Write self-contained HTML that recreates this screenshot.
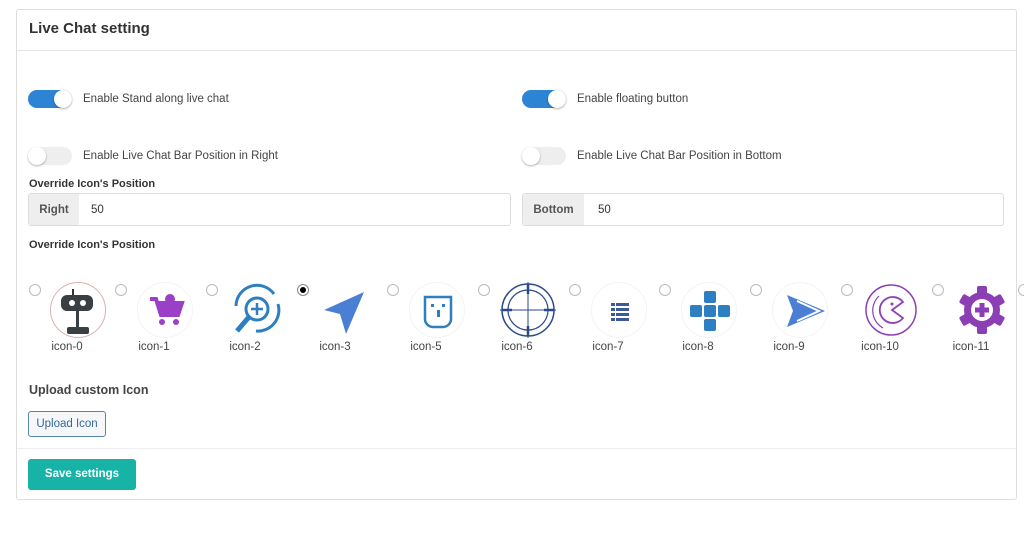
<!DOCTYPE html>
<html><head><style>
*{margin:0;padding:0;box-sizing:border-box}
body{width:1024px;height:542px;background:#fff;font-family:"Liberation Sans",sans-serif;color:#333;position:relative;overflow:hidden}
.card{position:absolute;left:16px;top:9px;width:1001px;height:491px;border:1px solid #ddd;border-radius:3px;background:#fff}
.a{position:absolute}
.t{font-size:11.5px;color:#444}
.tog{position:absolute;width:44px;height:18px;border-radius:9px}
.tog.on{background:#2d84d4}
.tog.off{background:#eee}
.tog .k{position:absolute;top:0;width:18px;height:18px;border-radius:50%;background:#fff;box-shadow:0 1px 2px rgba(0,0,0,.3)}
.lbl{font-size:11px;font-weight:bold;color:#333}
.inp{position:absolute;height:33px;border:1px solid #ddd;border-radius:3px;background:#fff}
.inp .ad{position:absolute;left:0;top:0;bottom:0;background:#eee;font-size:11.5px;color:#555;font-weight:bold;display:flex;align-items:center;justify-content:center}
.inp .v{position:absolute;top:10px;font-size:11.5px;color:#333}
.rad{position:absolute;width:12px;height:12px;border:1px solid #bbb;border-radius:50%;background:#fff;top:284px}
.ic{position:absolute;top:282px;width:56px;height:56px;border-radius:50%;border:1px solid #f3f3f3}
.ic svg{position:absolute;left:0;top:0}
.il{position:absolute;top:341px;font-size:11.5px;color:#444;width:60px;text-align:center}
</style></head><body>
<div class="card">
<div class="a" style="left:12px;top:10px;font-size:15px;font-weight:bold;color:#333">Live Chat setting</div>
<div class="a" style="left:0;right:0;top:40px;border-top:1px solid #e5e5e5"></div>
<div class="a" style="left:0;right:0;top:438px;border-top:1px solid #eee"></div>
</div>
<div class="tog on" style="left:28px;top:90px"><div class="k" style="left:26px"></div></div>
<div class="a t" style="left:83px;top:93px">Enable Stand along live chat</div>
<div class="tog on" style="left:522px;top:90px"><div class="k" style="left:26px"></div></div>
<div class="a t" style="left:577px;top:93px">Enable floating button</div>
<div class="tog off" style="left:28px;top:147px"><div class="k" style="left:0"></div></div>
<div class="a t" style="left:83px;top:150px">Enable Live Chat Bar Position in Right</div>
<div class="tog off" style="left:522px;top:147px"><div class="k" style="left:0"></div></div>
<div class="a t" style="left:577px;top:150px">Enable Live Chat Bar Position in Bottom</div>
<div class="a lbl" style="left:29px;top:178px">Override Icon's Position</div>
<div class="inp" style="left:28px;top:193px;width:483px"><div class="ad" style="width:50px">Right</div><div class="v" style="left:62px">50</div></div>
<div class="inp" style="left:522px;top:193px;width:482px"><div class="ad" style="width:61px">Bottom</div><div class="v" style="left:75px">50</div></div>
<div class="a lbl" style="left:29px;top:239px">Override Icon's Position</div>

<div class="rad" style="left:29px"></div>
<div class="ic" style="left:50px;border-color:#d9b0b0"><svg width="56" height="56"><line x1="22" y1="6" x2="22" y2="14" stroke="#333" stroke-width="2"/><rect x="10" y="12" width="32" height="16" rx="6" fill="#3a3f44"/><circle cx="21" cy="20" r="3" fill="#fff"/><circle cx="32" cy="20" r="3" fill="#fff"/><rect x="25" y="28" width="3" height="17" fill="#3a3f44"/><rect x="16" y="44" width="22" height="7" rx="2" fill="#3a3f44"/></svg></div>
<div class="il" style="left:37px">icon-0</div>

<div class="rad" style="left:115px"></div>
<div class="ic" style="left:137px"><svg width="56" height="56"><path d="M12 16h6l5 16h17l4-12H20" fill="none" stroke="#9b3fc7" stroke-width="4"/><rect x="20" y="20" width="22" height="10" fill="#9b3fc7"/><circle cx="32" cy="16" r="5" fill="#9b3fc7"/><circle cx="24" cy="39" r="3" fill="#9b3fc7"/><circle cx="38" cy="39" r="3" fill="#9b3fc7"/></svg></div>
<div class="il" style="left:124px">icon-1</div>

<div class="rad" style="left:206px"></div>
<div class="ic" style="left:228px;border:none"><svg width="56" height="56"><path d="M8 24A21 21 0 0 1 46 12M50 22A21 21 0 0 1 28 49" fill="none" stroke="#2d7fc1" stroke-width="3"/><circle cx="29" cy="27" r="11" fill="none" stroke="#2d7fc1" stroke-width="3"/><path d="M29 21v12M23 27h12" stroke="#2d7fc1" stroke-width="2.5"/><path d="M21 35L9 49" stroke="#2d7fc1" stroke-width="5"/></svg></div>
<div class="il" style="left:215px">icon-2</div>

<div class="rad" style="left:297px;border-color:#888"><div style="position:absolute;left:2px;top:2px;width:6px;height:6px;border-radius:50%;background:#000"></div></div>
<div class="ic" style="left:318px;border:none"><svg width="56" height="56"><path d="M46 10L6 28l16 4 6 20z" fill="#4a7fd4"/></svg></div>
<div class="il" style="left:305px">icon-3</div>

<div class="rad" style="left:387px"></div>
<div class="ic" style="left:409px"><svg width="56" height="56"><path d="M15 14h26v22a8 8 0 0 1-8 8H23a8 8 0 0 1-8-8z" fill="none" stroke="#2d7fc1" stroke-width="2.5"/><rect x="21" y="21" width="3" height="3" fill="#2d7fc1"/><rect x="32" y="21" width="3" height="3" fill="#2d7fc1"/><rect x="27" y="27" width="3" height="7" fill="#2d7fc1"/></svg></div>
<div class="il" style="left:396px">icon-5</div>

<div class="rad" style="left:478px"></div>
<div class="ic" style="left:500px;border:none"><svg width="56" height="56"><circle cx="28" cy="28" r="26" fill="none" stroke="#2b4a8a" stroke-width="1.5"/><circle cx="28" cy="28" r="20" fill="none" stroke="#2b4a8a" stroke-width="1.2"/><path d="M28 0v56M0 28h56" stroke="#2b4a8a" stroke-width="1"/><path d="M2 28h10M44 28h10M28 2v10M28 44v10" stroke="#2b4a8a" stroke-width="2.5"/></svg></div>
<div class="il" style="left:487px">icon-6</div>

<div class="rad" style="left:569px"></div>
<div class="ic" style="left:591px"><svg width="56" height="56"><g fill="#3c5a9a"><rect x="19" y="20" width="4" height="3"/><rect x="24" y="20" width="13" height="3"/><rect x="19" y="25" width="4" height="3"/><rect x="24" y="25" width="13" height="3"/><rect x="19" y="30" width="4" height="3"/><rect x="24" y="30" width="13" height="3"/><rect x="19" y="35" width="4" height="3"/><rect x="24" y="35" width="13" height="3"/></g></svg></div>
<div class="il" style="left:578px">icon-7</div>

<div class="rad" style="left:659px"></div>
<div class="ic" style="left:681px"><svg width="56" height="56"><g fill="#2d7fc1"><rect x="22" y="8" width="12" height="12" rx="2"/><rect x="8" y="22" width="12" height="12" rx="2"/><rect x="22" y="22" width="12" height="12" rx="2"/><rect x="36" y="22" width="12" height="12" rx="2"/><rect x="22" y="36" width="12" height="12" rx="2"/></g></svg></div>
<div class="il" style="left:668px">icon-8</div>

<div class="rad" style="left:750px"></div>
<div class="ic" style="left:772px"><svg width="56" height="56"><path d="M14 12l38 16-38 16 6-16z" fill="#4a7fd4"/><path d="M24 18L46 28 24 38" fill="none" stroke="#fff" stroke-width="2"/></svg></div>
<div class="il" style="left:759px">icon-9</div>

<div class="rad" style="left:841px"></div>
<div class="ic" style="left:863px;border:none"><svg width="56" height="56"><circle cx="28" cy="28" r="25" fill="none" stroke="#8c3fb5" stroke-width="1.5"/><path d="M16 14A20 20 0 0 0 20 46" fill="none" stroke="#8c3fb5" stroke-width="1.2"/><path d="M40 20A13 13 0 1 0 40 36L29 28z" fill="none" stroke="#8c3fb5" stroke-width="1.8"/><circle cx="29" cy="22" r="1.5" fill="#8c3fb5"/></svg></div>
<div class="il" style="left:850px">icon-10</div>

<div class="rad" style="left:932px"></div>
<div class="ic" style="left:954px;border:none"><svg width="56" height="56"><g transform="translate(28 28)" fill="#8c3fb5"><circle r="18"/><rect x="-5" y="-24" width="10" height="48" rx="2"/><rect x="-5" y="-24" width="10" height="48" rx="2" transform="rotate(60)"/><rect x="-5" y="-24" width="10" height="48" rx="2" transform="rotate(120)"/><circle r="11" fill="#fff"/><rect x="-2.5" y="-7" width="5" height="14"/><rect x="-7" y="-2.5" width="14" height="5"/></g></svg></div>
<div class="il" style="left:941px">icon-11</div>
<div class="rad" style="left:1018px"></div>

<div class="a" style="left:29px;top:383px;font-size:12.5px;font-weight:bold;color:#444">Upload custom Icon</div>
<div class="a" style="left:28px;top:411px;width:78px;height:26px;border:1px solid #5a86a8;border-radius:3px;background:#f5f7f9;color:#35689a;font-size:11.5px;text-align:center;line-height:24px">Upload Icon</div>
<div class="a" style="left:28px;top:459px;width:108px;height:31px;background:#17b3a6;border-radius:3px;color:#fff;font-size:11.5px;font-weight:bold;text-align:center;line-height:31px">Save settings</div>
</body></html>
